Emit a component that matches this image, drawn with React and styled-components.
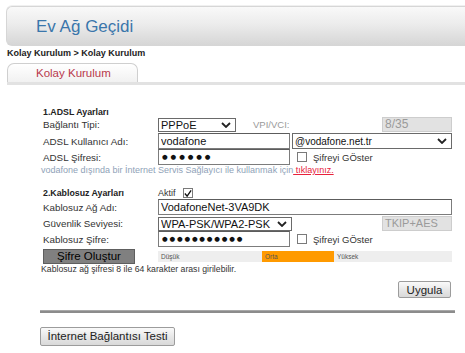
import React from "react";
import styled, { createGlobalStyle } from "styled-components";

const Global = createGlobalStyle`
  html, body { margin: 0; padding: 0; background: #fff; }
  body { font-family: "Liberation Sans", Arial, sans-serif; color: #333; }
  * { box-sizing: border-box; }
`;

const Page = styled.div`
  width: 465px;
  padding-top: 6px;
`;

const Header = styled.div`
  margin-left: 6px;
  height: 40px;
  border: 1px solid #d6d6d6;
  border-right: none;
  border-radius: 6px 0 0 6px;
  background: linear-gradient(#f9f9f9, #ececec 45%, #d6d6d6);
  display: flex;
  align-items: center;
  padding-left: 29px;
  box-shadow: 0 -1px 0 #f0f0f0;
`;

const Title = styled.h1`
  margin: 0;
  font-size: 17px;
  font-weight: normal;
  color: #3a76ab;
  line-height: 1;
  padding-top: 1px;
`;

const Breadcrumb = styled.div`
  margin: 2px 0 0 7px;
  font-size: 9px;
  font-weight: bold;
  color: #222;
  line-height: 10px;
`;

const TabBar = styled.div`
  margin: 5px 0 0 7px;
  border-bottom: 3px solid #e2e2e2;
  display: flex;
`;

const Tab = styled.div`
  width: 131px;
  height: 19px;
  border: 1px solid #cfcfcf;
  border-bottom: none;
  border-radius: 7px 7px 0 0;
  background: linear-gradient(#ffffff, #f1f1f1);
  color: #b8394c;
  font-size: 11.5px;
  line-height: 19px;
  padding-left: 28px;
`;

const Form = styled.div`
  margin: 22px 0 0 40px;
  width: 415px;
`;

const Row = styled.div`
  margin-left: 3px;
  width: 409px;
  height: ${(p) => p.$h || 16}px;
  display: flex;
  align-items: center;
  margin-top: ${(p) => p.$top || 0}px;
`;

const Heading = styled.div`
  width: 115px;
  flex: none;
  font-size: 8.8px;
  font-weight: bold;
  color: #222;
`;

const Label = styled.div`
  width: 115px;
  flex: none;
  font-size: 9.8px;
  color: #333;
`;

const TextInput = styled.input`
  width: ${(p) => p.$w}px;
  height: ${(p) => p.$h || 16}px;
  border: 1px solid #7c7c7c;
  border-top-color: #5c5c5c;
  padding: 0 2px;
  font-family: "Liberation Sans", Arial, sans-serif;
  font-size: 11px;
  color: #111;
  background: #fff;
  outline: none;
  flex: none;
`;

const Dots = styled(TextInput)`
  font-family: "DejaVu Sans", sans-serif;
  font-size: 6.5px;
  letter-spacing: ${(p) => p.$ls}px;
  padding-left: 3px;
`;

const Disabled = styled.div`
  margin-left: auto;
  width: 70px;
  height: 15px;
  background: #e2e2e2;
  border: 1px solid #cdcdcd;
  color: #9a9a9a;
  font-size: ${(p) => p.$fs || 12}px;
  line-height: 13px;
  padding-left: 2px;
`;

const SelectWrap = styled.span`
  position: relative;
  display: inline-flex;
  flex: none;
  margin-left: ${(p) => p.$ml || 0}px;
`;

const Select = styled.select`
  appearance: none;
  width: ${(p) => p.$w}px;
  height: ${(p) => p.$h || 14}px;
  border: 1px solid #6a6a6a;
  border-radius: 0;
  background: #fff;
  font-family: "Liberation Sans", Arial, sans-serif;
  font-size: ${(p) => p.$fs || 11}px;
  color: #111;
  padding: 0 0 0 2px;
  outline: none;
`;

const Chevron = styled.svg`
  position: absolute;
  right: 5px;
  top: 50%;
  margin-top: -3px;
  pointer-events: none;
`;

const Muted = styled.span`
  font-size: 9.5px;
  color: #9a9a9a;
  margin-left: 17px;
`;

const Box = styled.span`
  width: 10px;
  height: 10px;
  border: 1px solid #7a7a7a;
  background: #fff;
  display: inline-flex;
  align-items: center;
  justify-content: center;
  flex: none;
  margin-left: ${(p) => p.$ml || 0}px;
`;

const CheckText = styled.span`
  font-size: 9.5px;
  color: #333;
  margin-left: 6px;
`;

const Note = styled.div`
  margin-left: 1px;
  font-size: ${(p) => (p.$dark ? 8.7 : 9)}px;
  line-height: 10px;
  height: 10px;
  color: ${(p) => (p.$dark ? "#333" : "#8fa2b8")};
  white-space: nowrap;
`;

const Link = styled.a`
  color: #e8213b;
  text-decoration: underline;
`;

const Aktif = styled.span`
  display: inline-flex;
  align-items: center;
  font-size: 9px;
  color: #333;
  gap: 7px;
`;

const DarkButton = styled.button`
  width: 92px;
  height: 15px;
  border: 1px solid #5e5e5e;
  background: #808080;
  color: #000;
  font-family: "Liberation Sans", Arial, sans-serif;
  font-size: 11.5px;
  line-height: 13px;
  padding: 0;
  flex: none;
`;

const Strength = styled.div`
  margin-left: 23px;
  width: 294px;
  height: 11px;
  display: flex;
`;

const Seg = styled.div`
  width: ${(p) => p.$w}px;
  background: ${(p) => p.$bg};
  font-size: 6.5px;
  color: #555;
  line-height: 11px;
  padding-left: 3px;
`;

const ActionBar = styled.div`
  margin-top: 7px;
  width: 415px;
  padding: 0 4px 0 0;
  display: flex;
  justify-content: flex-end;
`;

const Rule = styled.div`
  margin-top: 12px;
  width: 415px;
  height: 3px;
  background-color: #8c8c8c;
  border-top: 1px solid #a8a8a8;
`;

const LightButton = styled.button`
  height: ${(p) => p.$h}px;
  width: ${(p) => p.$w}px;
  border: 1px solid #9c9c9c;
  border-radius: 2px;
  background: linear-gradient(#fafafa, #e8e8e8 50%, #d9d9d9);
  font-family: "Liberation Sans", Arial, sans-serif;
  font-size: 11.5px;
  color: #222;
  padding: 0;
`;

const BottomRow = styled.div`
  margin-top: 13px;
`;

const ChevronIcon = () => (
  <Chevron width="10" height="6" viewBox="0 0 10 6">
    <polyline points="1,1 5,5 9,1" fill="none" stroke="#222" strokeWidth="1.8" />
  </Chevron>
);

const Check = ({ checked, ml }) => (
  <Box $ml={ml}>
    {checked && (
      <svg width="9" height="9" viewBox="0 0 9 9">
        <polyline points="1,4.5 3.5,7.5 8,1" fill="none" stroke="#111" strokeWidth="1.5" />
      </svg>
    )}
  </Box>
);

export default function App() {
  return (
    <Page>
      <Global />
      <Header>
        <Title>Ev Ağ Geçidi</Title>
      </Header>
      <Breadcrumb>Kolay Kurulum &gt; Kolay Kurulum</Breadcrumb>
      <TabBar>
        <Tab>Kolay Kurulum</Tab>
      </TabBar>
      <Form>
        <Row $h={10}>
          <Heading>1.ADSL Ayarları</Heading>
        </Row>
        <Row $h={15}>
          <Label>Bağlantı Tipi:</Label>
          <SelectWrap>
            <Select $w={78} $h={14} defaultValue="PPPoE">
              <option>PPPoE</option>
            </Select>
            <ChevronIcon />
          </SelectWrap>
          <Muted>VPI/VCI:</Muted>
          <Disabled>8/35</Disabled>
        </Row>
        <Row $top={1}>
          <Label>ADSL Kullanıcı Adı:</Label>
          <TextInput $w={132} defaultValue="vodafone" />
          <SelectWrap $ml={2}>
            <Select $w={160} $h={16} $fs={10} defaultValue="@vodafone.net.tr">
              <option>@vodafone.net.tr</option>
            </Select>
            <ChevronIcon />
          </SelectWrap>
        </Row>
        <Row>
          <Label>ADSL Şifresi:</Label>
          <Dots $w={132} $ls={2.9} defaultValue="●●●●●●" />
          <Check ml={7} />
          <CheckText>Şifreyi GÖster</CheckText>
        </Row>
        <Note>
          vodafone dışında bir İnternet Servis Sağlayıcı ile kullanmak için<Link> tıklayınız.</Link>
        </Note>

        <Row $h={10} $top={13}>
          <Heading>2.Kablosuz Ayarları</Heading>
          <Aktif>
            Aktif <Check checked />
          </Aktif>
        </Row>
        <Row $top={1}>
          <Label>Kablosuz Ağ Adı:</Label>
          <TextInput $w={294} defaultValue="VodafoneNet-3VA9DK" />
        </Row>
        <Row $h={15} $top={1}>
          <Label>Güvenlik Seviyesi:</Label>
          <SelectWrap>
            <Select $w={134} $h={14} defaultValue="WPA-PSK/WPA2-PSK">
              <option>WPA-PSK/WPA2-PSK</option>
            </Select>
            <ChevronIcon />
          </SelectWrap>
          <Disabled $fs={11}>TKIP+AES</Disabled>
        </Row>
        <Row>
          <Label>Kablosuz Şifre:</Label>
          <Dots $w={132} $ls={1.8} defaultValue="●●●●●●●●●●●" />
          <Check ml={7} />
          <CheckText>Şifreyi GÖster</CheckText>
        </Row>
        <Row $h={16} $top={1}>
          <DarkButton>Şifre Oluştur</DarkButton>
          <Strength>
            <Seg $w={104} $bg="#eeeeee">Düşük</Seg>
            <Seg $w={72} $bg="#ff9a00">Orta</Seg>
            <Seg $w={118} $bg="#eeeeee">Yüksek</Seg>
          </Strength>
        </Row>
        <Note $dark>Kablosuz ağ şifresi 8 ile 64 karakter arası girilebilir.</Note>
        <ActionBar>
          <LightButton $w={53} $h={17}>Uygula</LightButton>
        </ActionBar>
        <Rule />
        <BottomRow>
          <LightButton $w={135} $h={19}>İnternet Bağlantısı Testi</LightButton>
        </BottomRow>
      </Form>
    </Page>
  );
}
